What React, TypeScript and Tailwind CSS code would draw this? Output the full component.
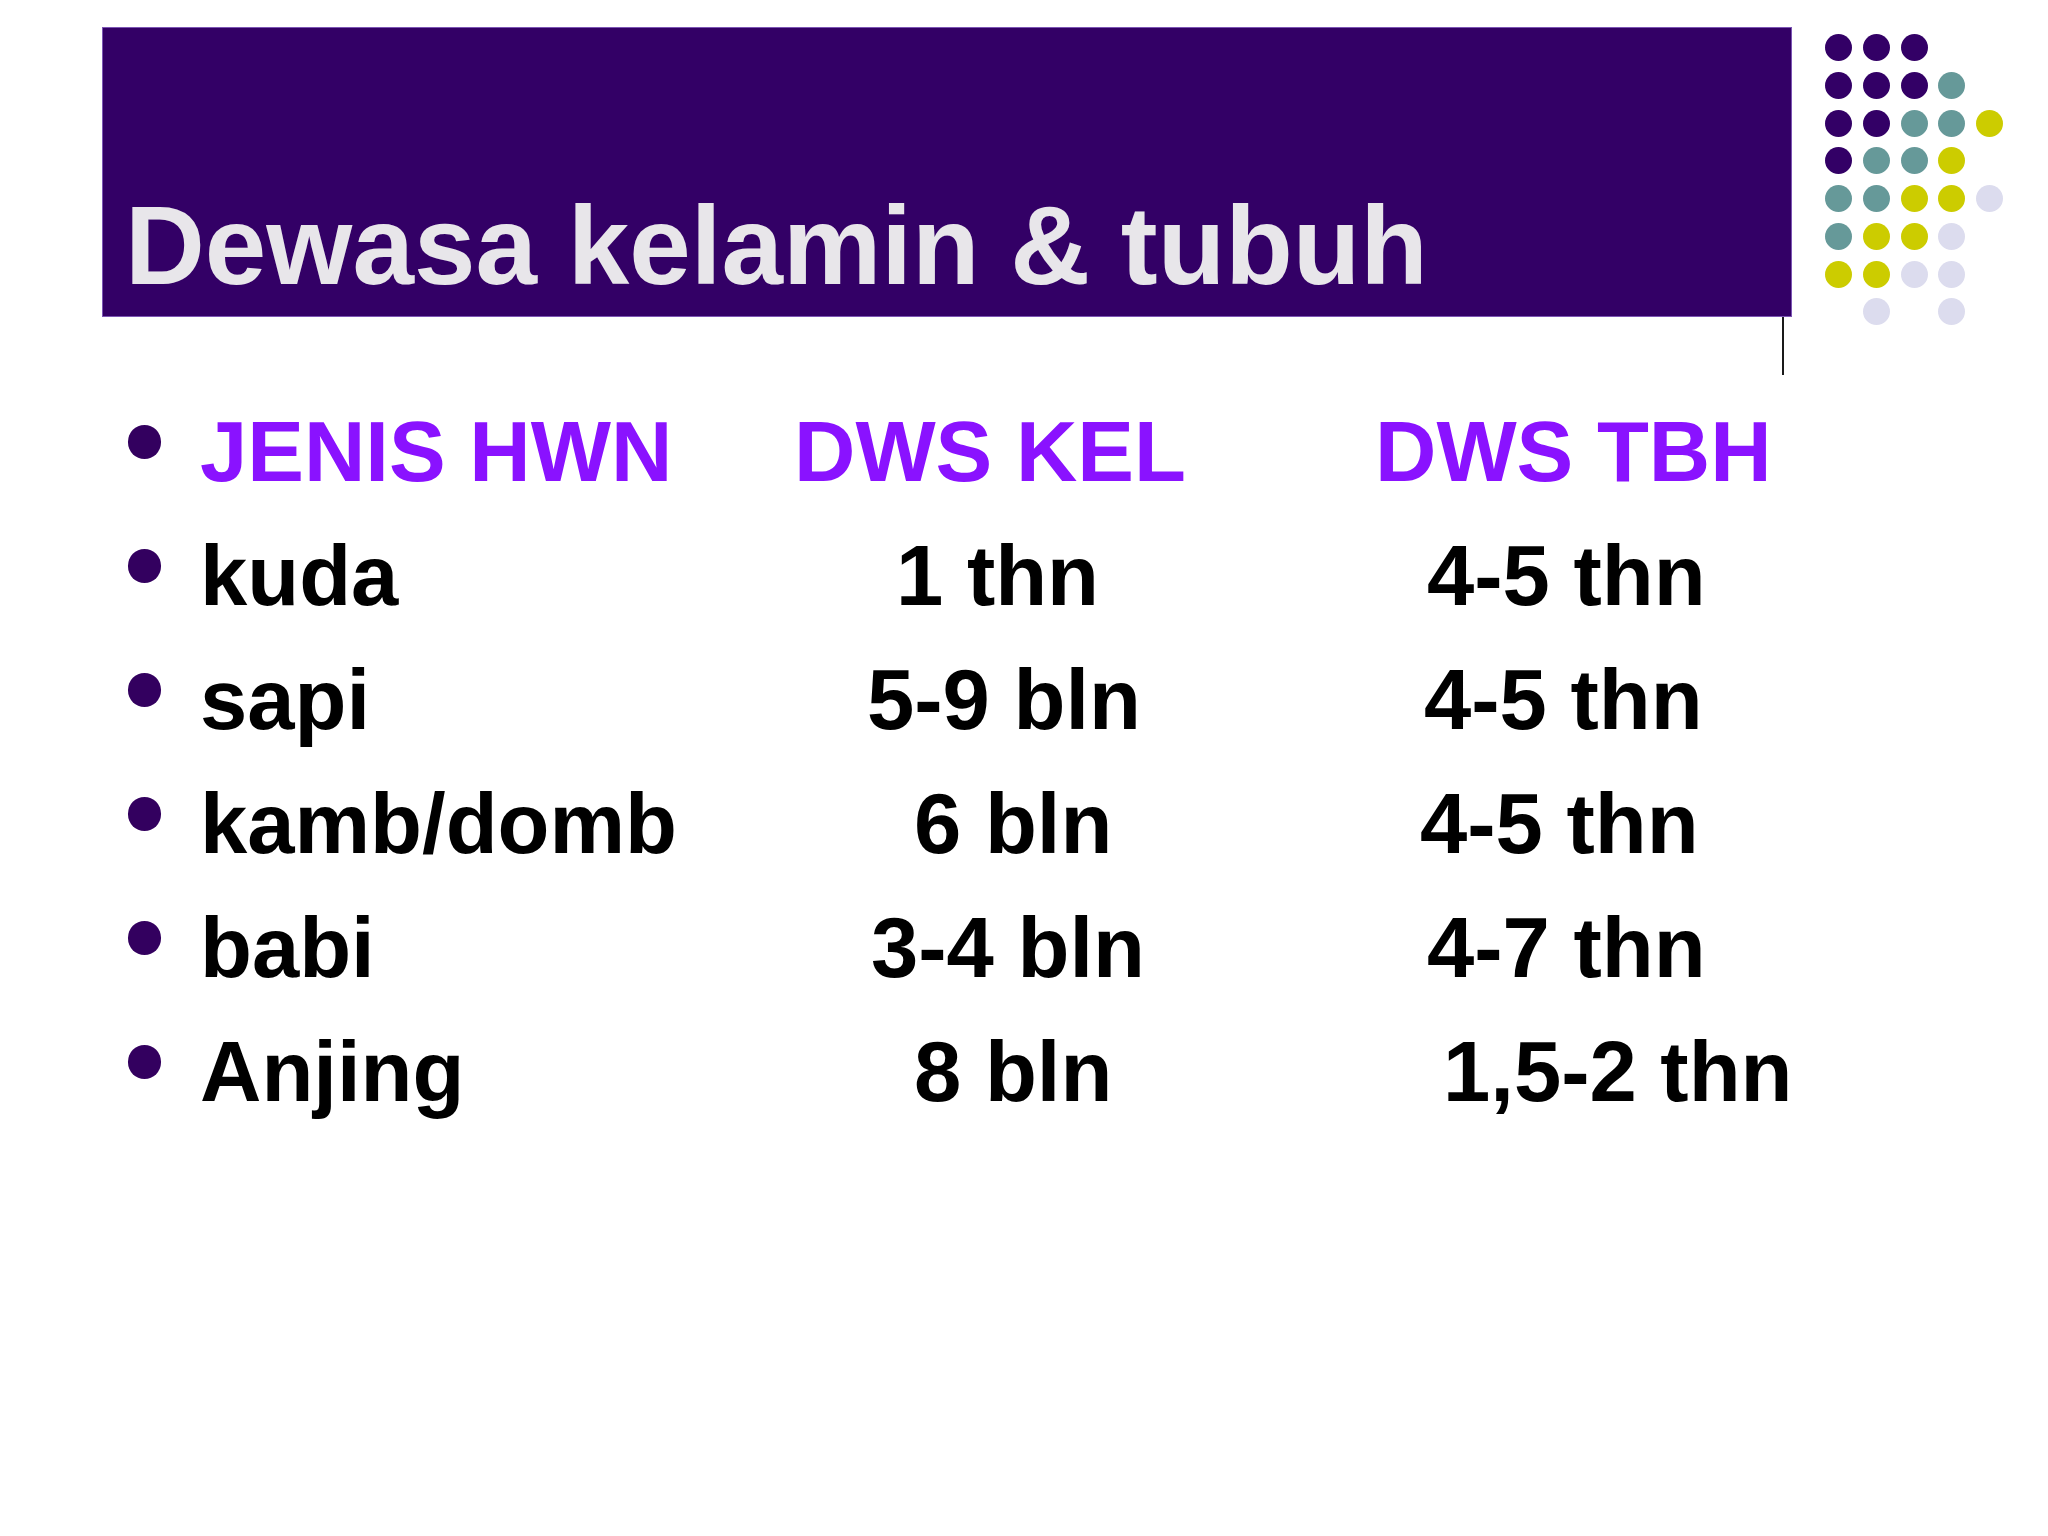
const P = 'bg-[#330066]';
const T = 'bg-[#669999]';
const Y = 'bg-[#cccc00]';
const L = 'bg-[#dcdcee]';
const E = 'bg-transparent';

// decorative dot grid, top right
const dots = [
  [P, P, P, E, E],
  [P, P, P, T, E],
  [P, P, T, T, Y],
  [P, T, T, Y, E],
  [T, T, Y, Y, L],
  [T, Y, Y, L, E],
  [Y, Y, L, L, E],
  [E, L, E, L, E],
];

type Row = {
  jenis: string;
  kel: string;
  tbh: string;
  kelPad: string;
  tbhPad: string;
};

const rows: Row[] = [
  { jenis: 'kuda', kel: '1 thn', tbh: '4-5 thn', kelPad: 'pl-[102px]', tbhPad: 'pl-[49px]' },
  { jenis: 'sapi', kel: '5-9 bln', tbh: '4-5 thn', kelPad: 'pl-[73px]', tbhPad: 'pl-[46px]' },
  { jenis: 'kamb/domb', kel: '6 bln', tbh: '4-5 thn', kelPad: 'pl-[120px]', tbhPad: 'pl-[42px]' },
  { jenis: 'babi', kel: '3-4 bln', tbh: '4-7 thn', kelPad: 'pl-[77px]', tbhPad: 'pl-[49px]' },
  { jenis: 'Anjing', kel: '8 bln', tbh: '1,5-2 thn', kelPad: 'pl-[120px]', tbhPad: 'pl-[65px]' },
];

function Bullet() {
  return <div className="mt-[35px] h-[34px] w-[33px] shrink-0 rounded-full bg-[#33005f]" />;
}

export default function App() {
  return (
    <div className="h-[1536px] w-[2048px] overflow-hidden bg-white font-['Liberation_Sans',Arial,sans-serif] font-bold">
      <div className="flex pl-[102px] pt-[27px]">
        <div className="flex w-[1690px] flex-col">
          <div className="flex h-[290px] items-end border border-[#7c55b4] bg-[#330066] pb-[14px] pl-[22px]">
            <h1 className="text-[110.6px] leading-none text-[#e8e6ea]">Dewasa kelamin &amp; tubuh</h1>
          </div>
          <div className="ml-[1680px] h-[58px] w-[2px] bg-[#1a1a1a]" />
        </div>
        <div className="ml-[33px] mt-[7px] grid grid-cols-[repeat(5,27px)] gap-[10.75px] self-start">
          {dots.flat().map((c, i) => (
            <div key={i} className={`h-[27px] w-[27px] rounded-full ${c}`} />
          ))}
        </div>
      </div>

      <div className="mt-[15px] flex flex-col pl-[128px] text-[85px] leading-[124px]">
        <div className="flex">
          <Bullet />
          <div className="ml-[39px] w-[594px] text-[#8a12ff]">JENIS HWN</div>
          <div className="w-[581px] text-[#8a12ff]">DWS KEL</div>
          <div className="text-[#8a12ff]">DWS TBH</div>
        </div>
        {rows.map((r) => (
          <div key={r.jenis} className="flex text-black">
            <Bullet />
            <div className="ml-[39px] w-[594px]">{r.jenis}</div>
            <div className={`w-[584px] ${r.kelPad}`}>{r.kel}</div>
            <div className={r.tbhPad}>{r.tbh}</div>
          </div>
        ))}
      </div>
    </div>
  );
}
